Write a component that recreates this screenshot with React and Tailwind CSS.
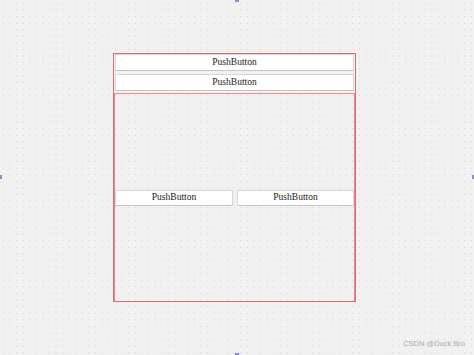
import React from 'react';

const PushButton = ({ className = '' }) => (
  <div
    className={`flex items-center justify-center bg-white border border-[#d6d6d6] border-b-[#c4c4c4] rounded-[1px] text-[#1a1a1a] text-[9.5px] leading-none ${className}`}
    style={{ fontFamily: '"Liberation Serif", "Noto Sans CJK SC", serif' }}
  >
    PushButton
  </div>
);

const App = () => {
  return (
    <div className="relative w-[474px] h-[355px] overflow-hidden bg-[#f1f1f1] bg-[radial-gradient(circle,#cdcdcd_0.6px,transparent_0.8px)] bg-[size:6.6px_6.6px] pt-[53px] pl-[113px]">
      {/* resize handles */}
      <div className="absolute left-[235px] top-0 w-[4px] h-[2px] bg-[#8f8fc8]" />
      <div className="absolute left-[235px] bottom-0 w-[4px] h-[2px] bg-[#8f8fc8]" />
      <div className="absolute left-0 top-[175px] w-[2px] h-[4px] bg-[#8f8fc8]" />
      <div className="absolute right-0 top-[175px] w-[2px] h-[4px] bg-[#8f8fc8]" />

      <div className="w-[243px] h-[249px] shadow-[inset_0_0_0_1px_#e06a6a] p-px flex flex-col">
        <PushButton className="mx-px h-[17px]" />
        <PushButton className="mx-px h-[17px] mt-[3px]" />
        <div className="mt-[2px] flex-1 border border-b-0 border-[#e88a8a] flex items-center gap-[4px] pt-[1px]">
          <PushButton className="w-[118px] h-[16px]" />
          <PushButton className="w-[117px] h-[16px]" />
        </div>
      </div>

      <div
        className="absolute right-[9px] bottom-[8px] text-[7.5px] text-[#a9a9a9] leading-none"
        style={{ fontFamily: '"Liberation Sans", Arial, sans-serif' }}
      >
        CSDN @Duck Bro
      </div>
    </div>
  );
};

export default App;
